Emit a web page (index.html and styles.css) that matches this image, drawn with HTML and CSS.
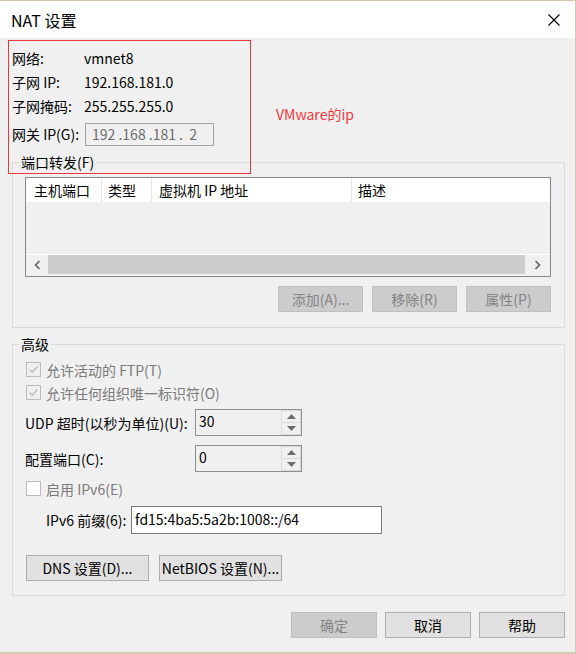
FILE: index.html
```html
<!DOCTYPE html>
<html lang="zh-CN">
<head>
    <meta charset="UTF-8">
    <title>NAT 设置</title>
    <link rel="stylesheet" href="styles.css">
</head>
<body>
<div class="dialog">
    <div class="titlebar">
        <span class="title">NAT 设置</span>
        <span class="close">
            <svg width="12" height="12" viewBox="0 0 12 12"><path d="M0.5 0.5 L11.5 11.5 M11.5 0.5 L0.5 11.5" stroke="#000" stroke-width="1.1" fill="none"/></svg>
        </span>
    </div>

    <div class="content">
        <div class="info">
            <div class="info-row"><span class="info-label">网络:</span><span>vmnet8</span></div>
            <div class="info-row"><span class="info-label">子网 IP:</span><span>192.168.181.0</span></div>
            <div class="info-row"><span class="info-label">子网掩码:</span><span>255.255.255.0</span></div>
            <div class="info-row gateway"><span class="info-label">网关 IP(G):</span><div class="ip-box">192 .168 .181 .  2</div></div>
        </div>

        <fieldset class="group">
            <legend>端口转发(F)</legend>
            <div class="group-body port-body">
                <div class="list">
                    <div class="list-head">
                        <div class="col col-port">主机端口</div>
                        <div class="col col-type">类型</div>
                        <div class="col col-ip">虚拟机 IP 地址</div>
                        <div class="col col-desc">描述</div>
                    </div>
                    <div class="list-rows"></div>
                    <div class="hscroll">
                        <span class="arrow arrow-left">
                            <svg width="7" height="10" viewBox="0 0 7 10"><path d="M5.5 1 L1.5 5 L5.5 9" stroke="#606060" stroke-width="1.6" fill="none"/></svg>
                        </span>
                        <span class="thumb"></span>
                        <span class="arrow arrow-right">
                            <svg width="7" height="10" viewBox="0 0 7 10"><path d="M1.5 1 L5.5 5 L1.5 9" stroke="#606060" stroke-width="1.6" fill="none"/></svg>
                        </span>
                    </div>
                </div>
                <div class="btn-row">
                    <button class="btn small" disabled>添加(A)...</button>
                    <button class="btn small" disabled>移除(R)</button>
                    <button class="btn small" disabled>属性(P)</button>
                </div>
            </div>
        </fieldset>

        <fieldset class="group advanced">
            <legend>高级</legend>
            <div class="group-body adv-body">
                <div class="check-row disabled">
                    <span class="checkbox">
                        <svg width="13" height="13" viewBox="0 0 13 13"><path d="M2.5 6.5 L5.2 9.2 L10.5 3.5" stroke="#bcbcbc" stroke-width="1.5" fill="none"/></svg>
                    </span>
                    <span>允许活动的 FTP(T)</span>
                </div>
                <div class="check-row disabled">
                    <span class="checkbox">
                        <svg width="13" height="13" viewBox="0 0 13 13"><path d="M2.5 6.5 L5.2 9.2 L10.5 3.5" stroke="#bcbcbc" stroke-width="1.5" fill="none"/></svg>
                    </span>
                    <span>允许任何组织唯一标识符(O)</span>
                </div>

                <div class="field-row udp-row">
                    <span class="field-label">UDP 超时(以秒为单位)(U):</span>
                    <div class="spin">
                        <span class="spin-value">30</span>
                        <span class="spin-btns">
                            <span class="spin-btn"><svg width="9" height="5" viewBox="0 0 9 5"><path d="M4.5 0 L9 5 L0 5Z" fill="#6d6d6d"/></svg></span>
                            <span class="spin-btn"><svg width="9" height="5" viewBox="0 0 9 5"><path d="M0 0 L9 0 L4.5 5Z" fill="#6d6d6d"/></svg></span>
                        </span>
                    </div>
                </div>
                <div class="field-row port-row">
                    <span class="field-label">配置端口(C):</span>
                    <div class="spin">
                        <span class="spin-value">0</span>
                        <span class="spin-btns">
                            <span class="spin-btn"><svg width="9" height="5" viewBox="0 0 9 5"><path d="M4.5 0 L9 5 L0 5Z" fill="#6d6d6d"/></svg></span>
                            <span class="spin-btn"><svg width="9" height="5" viewBox="0 0 9 5"><path d="M0 0 L9 0 L4.5 5Z" fill="#6d6d6d"/></svg></span>
                        </span>
                    </div>
                </div>

                <div class="check-row disabled ipv6-check">
                    <span class="checkbox empty"></span>
                    <span>启用 IPv6(E)</span>
                </div>
                <div class="field-row prefix-row">
                    <span class="prefix-label">IPv6 前缀(6):</span>
                    <div class="text-box">fd15:4ba5:5a2b:1008::/64</div>
                </div>

                <div class="btn-row left">
                    <button class="btn wide">DNS 设置(D)...</button>
                    <button class="btn wide">NetBIOS 设置(N)...</button>
                </div>
            </div>
        </fieldset>

        <div class="footer">
            <button class="btn foot" disabled>确定</button>
            <button class="btn foot">取消</button>
            <button class="btn foot">帮助</button>
        </div>
    </div>

    <!-- red annotation drawn over the screenshot -->
    <div class="annot-box"></div>
    <div class="annot-text">VMware的ip</div>
</div>
</body>
</html>
```

FILE: styles.css
```css
body {
    margin: 0;
    width: 576px;
    height: 654px;
    overflow: hidden;
    background-color: #d6c8ae;
    font-family: "Noto Sans CJK SC", "Noto Sans", sans-serif;
    font-size: 14px;
    line-height: 16px;
    color: #000;
}

.dialog {
    position: relative;
    width: 575px;
    height: 651px;
    margin-top: 1px;
    background-color: #f0f0f0;
    display: flex;
    flex-direction: column;
}

.titlebar {
    height: 37px;
    flex: none;
    background-color: #fff;
    display: flex;
    align-items: center;
    justify-content: space-between;
    padding-left: 11px;
}

.title {
    font-size: 16px;
    line-height: 20px;
}

.close {
    display: flex;
    margin-right: 15px;
}

.content {
    padding: 8px 10px 0 12px;
}

/* network info */
.info-row {
    height: 24px;
    display: flex;
    align-items: center;
}

.info-label {
    width: 72px;
    flex: none;
}

.info-row.gateway {
    height: 26px;
    margin-top: 3px;
}

.ip-box {
    margin-left: 1px;
    width: 129px;
    height: 23px;
    box-sizing: border-box;
    border: 1px solid #a3a3a3;
    padding-left: 6px;
    color: #6d6d6d;
    white-space: pre;
    display: flex;
    align-items: center;
}

/* group boxes */
.group {
    margin: 7px 0 0;
    padding: 0;
    border: 1px solid #dcdcdc;
    min-width: 0;
}

.group legend {
    margin-left: 6px;
    padding: 0 2px;
    font-size: 14px;
    line-height: 16px;
}

.port-body {
    padding: 7px 13px 15px 12px;
}

.list {
    height: 100px;
    box-sizing: border-box;
    border: 1px solid #828790;
    display: flex;
    flex-direction: column;
}

.list-head {
    height: 24px;
    background-color: #fff;
    display: flex;
    flex: none;
}

.col {
    box-sizing: border-box;
    padding-left: 7px;
    display: flex;
    align-items: center;
    border-right: 1px solid #e5e5e5;
}

.col-port { width: 76px; padding-left: 8px; }
.col-type { width: 50px; padding-left: 6px; }
.col-ip { width: 200px; }
.col-desc { flex: 1; border-right: none; padding-left: 6px; }

.list-rows {
    flex: 1;
}

.hscroll {
    height: 22px;
    flex: none;
    box-sizing: border-box;
    border-top: 1px solid #fff;
    padding-bottom: 2px;
    display: flex;
}

.arrow {
    display: flex;
    align-items: center;
    justify-content: center;
}

.arrow-left { width: 22px; }
.arrow-right { width: 25px; }

.thumb {
    flex: 1;
    background-color: #cdcdcd;
}

/* buttons */
.btn-row {
    display: flex;
    justify-content: flex-end;
    gap: 9px;
    margin-top: 9px;
}

.btn-row.left {
    justify-content: flex-start;
    gap: 10px;
    margin-top: 21px;
}

.btn {
    box-sizing: border-box;
    height: 26px;
    padding: 0;
    font-family: inherit;
    font-size: 14px;
    line-height: 16px;
    color: #000;
    background-color: #e1e1e1;
    border: 1px solid #adadad;
    border-radius: 0;
}

.btn:disabled {
    color: #838383;
    background-color: #cccccc;
    border-color: #bfbfbf;
}

.btn.small { width: 85px; }
.btn.wide { width: 123px; height: 26px; }
.btn.foot { width: 86px; }

/* advanced */
.advanced {
    margin-top: 8px;
}

.adv-body {
    padding: 6px 12px 14px 13px;
}

.check-row {
    height: 23px;
    display: flex;
    align-items: center;
}

.check-row.disabled {
    color: #7a7a7a;
}

.checkbox {
    width: 13px;
    height: 13px;
    border: 1px solid #bcbcbc;
    margin-right: 5px;
    display: flex;
}

.checkbox.empty {
    background-color: #fff;
}

.field-row {
    display: flex;
    align-items: center;
}

.udp-row { margin-top: 5px; }
.port-row { margin-top: 9px; }
.ipv6-check { margin-top: 5px; }
.prefix-row { margin-top: 6px; }

.field-label {
    width: 170px;
    margin-left: -1px;
}

.spin {
    width: 107px;
    height: 27px;
    box-sizing: border-box;
    border: 1px solid #8f8f8f;
    display: flex;
}

.spin-value {
    flex: 1;
    padding: 3px 0 0 3px;
}

.spin-btns {
    width: 19px;
    display: flex;
    flex-direction: column;
    border-left: 1px solid #dadada;
}

.spin-btn {
    flex: 1;
    display: flex;
    align-items: center;
    justify-content: center;
    border: 1px solid #dadada;
    border-left: none;
}

.spin-btn + .spin-btn {
    border-top: none;
}

.prefix-label {
    width: 85px;
    padding-left: 20px;
}

.text-box {
    width: 251px;
    height: 28px;
    box-sizing: border-box;
    border: 1px solid #7a7a7a;
    background-color: #fff;
    padding: 4px 0 0 3px;
}

.footer {
    display: flex;
    justify-content: flex-end;
    gap: 8px;
    margin-top: 16px;
}

/* annotation */
.annot-box {
    position: absolute;
    left: 8px;
    top: 39px;
    width: 243px;
    height: 134px;
    box-sizing: border-box;
    border: 1px solid #e8383d;
}

.annot-text {
    position: absolute;
    left: 276px;
    top: 105px;
    color: #f2383d;
    font-size: 14px;
}
```
